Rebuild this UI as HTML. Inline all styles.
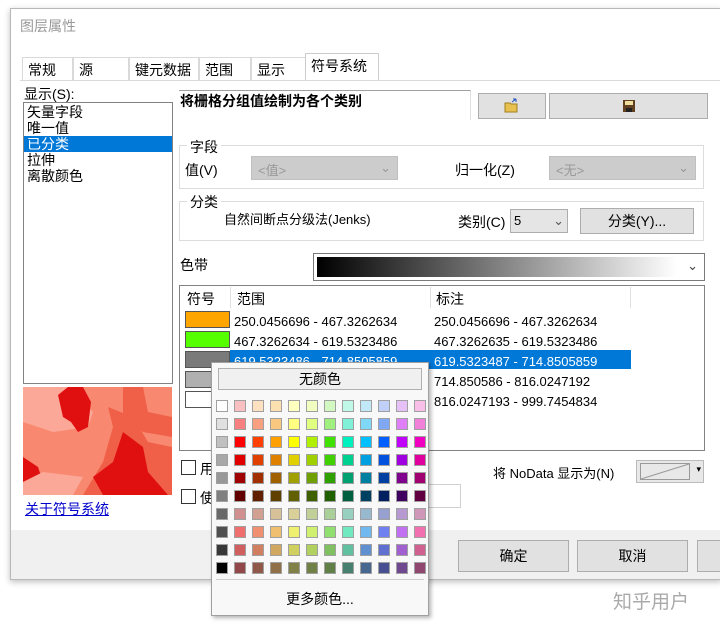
<!DOCTYPE html>
<html><head><meta charset="utf-8"><style>
*{box-sizing:border-box;margin:0;padding:0}
body{width:720px;height:624px;background:#fff;position:relative;overflow:hidden;font-family:"Liberation Sans","Noto Sans CJK SC",sans-serif;font-size:13px;color:#000}
.a{position:absolute}
.win{left:10px;top:8px;width:712px;height:572px;border:1px solid #b8b8b8;background:#fff;box-shadow:0 2px 6px rgba(0,0,0,.25)}
.tab{position:absolute;top:57px;height:24px;border:1px solid #d9d9d9;border-bottom:none;background:#fff;font-size:14px;padding:2px 5px}
.btn{position:absolute;background:#e1e1e1;border:1px solid #adadad;text-align:center;font-size:14px}
.combo{position:absolute;background:#ccc;border:1px solid #c0c0c0;color:#999;font-size:13px;padding:3px 6px}
.grp{position:absolute;border:1px solid #dcdcdc}
.sw{position:absolute;width:12px;height:12px;border:1px solid #a0a0a0}
.cb{position:absolute;width:15px;height:15px;border:1px solid #333;background:#fff}
td{padding:0}
</style></head><body>
<div class="a win"></div>
<div class="a" style="left:20px;top:16px;font-size:14px;color:#999">图层属性</div>
<!-- tabs -->
<div class="tab" style="left:22px;width:51px">常规</div>
<div class="tab" style="left:73px;width:56px">源</div>
<div class="tab" style="left:129px;width:70px">键元数据</div>
<div class="tab" style="left:199px;width:52px">范围</div>
<div class="tab" style="left:251px;width:55px">显示</div>
<div class="tab" style="left:305px;top:53px;height:28px;width:74px;border-color:#ccc">符号系统</div>
<div class="a" style="left:20px;top:80px;width:700px;height:1px;background:#d9d9d9"></div>
<div class="a" style="left:24px;top:84px;font-size:14px">显示(S):</div>
<div class="a" style="left:23px;top:102px;width:150px;height:282px;border:1px solid #828282;font-size:14px;line-height:16px;padding-top:1px">
<div style="padding-left:3px">矢量字段</div><div style="padding-left:3px">唯一值</div>
<div style="padding-left:3px;background:#0078d7;color:#fff">已分类</div>
<div style="padding-left:3px">拉伸</div><div style="padding-left:3px">离散颜色</div></div>
<svg class="a" style="left:23px;top:387px" width="149" height="108" viewBox="0 0 149 108">
<rect width="149" height="108" fill="#f88870"/>
<path d="M0 0H60V15L70 25L65 40L30 45L0 35Z" fill="#fca898"/>
<path d="M100 0H149V50L120 45L100 30Z" fill="#f06048"/>
<path d="M35 8L45 0H60L68 15L65 40L55 45L48 35L40 30Z" fill="#e01010"/>
<path d="M85 20L110 30L125 55L149 60V108H60L80 75L90 40Z" fill="#f06048"/>
<path d="M100 45L120 60L125 85L145 108H80L70 90L90 75Z" fill="#e01010"/>
<path d="M0 70L15 80L20 95L0 108Z" fill="#e01010"/>
<path d="M0 95L20 85L60 90L50 108H0Z" fill="#fca898"/>
<path d="M120 0H149V30L125 25Z" fill="#f88870"/>
</svg>
<div class="a" style="left:25px;top:499px;font-size:14px;color:#0000cc;text-decoration:underline">关于符号系统</div>
<!-- right -->
<div class="a" style="left:179px;top:90px;width:292px;height:30px;border-top:1px solid #a0a0a0;border-right:1px solid #e0e0e0;font-weight:bold;font-size:14px;padding-left:1px">将栅格分组值绘制为各个类别</div>
<div class="btn" style="left:478px;top:93px;width:68px;height:26px"><svg width="18" height="16" viewBox="0 0 18 16" style="margin-top:4px"><path d="M2 5H7L8 6H14V14H2Z" fill="#e8c050" stroke="#a08020"/><path d="M9 4L13 1M13 1L10 1M13 1L13 4" stroke="#2050c0" fill="none"/></svg></div>
<div class="btn" style="left:549px;top:93px;width:159px;height:26px"><svg width="14" height="14" viewBox="0 0 14 14" style="margin-top:5px"><rect x="1" y="1" width="12" height="12" fill="#604020"/><rect x="3" y="2" width="8" height="4" fill="#f0e0a0"/><rect x="4" y="9" width="6" height="4" fill="#222"/></svg></div>
<div class="grp" style="left:179px;top:145px;width:525px;height:44px"></div>
<div class="a" style="left:187px;top:137px;background:#fff;padding:0 3px;font-size:14px">字段</div>
<div class="a" style="left:185px;top:160px;font-size:14px">值(V)</div>
<div class="combo" style="left:251px;top:156px;width:147px;height:24px">&lt;值&gt;<span style="float:right">⌄</span></div>
<div class="a" style="left:455px;top:160px;font-size:14px">归一化(Z)</div>
<div class="combo" style="left:549px;top:156px;width:147px;height:24px">&lt;无&gt;<span style="float:right">⌄</span></div>
<div class="grp" style="left:179px;top:201px;width:525px;height:40px"></div>
<div class="a" style="left:187px;top:192px;background:#fff;padding:0 3px;font-size:14px">分类</div>
<div class="a" style="left:224px;top:209px;font-size:13px">自然间断点分级法(Jenks)</div>
<div class="a" style="left:458px;top:212px;font-size:14px">类别(C)</div>
<div class="a" style="left:510px;top:209px;width:58px;height:24px;background:#e5e5e5;border:1px solid #adadad;padding:3px 3px;font-size:13px">5<span style="float:right;color:#555">⌄</span></div>
<div class="btn" style="left:580px;top:208px;width:114px;height:26px;line-height:24px">分类(Y)...</div>
<div class="a" style="left:180px;top:255px;font-size:14px">色带</div>
<div class="a" style="left:313px;top:253px;width:392px;height:28px;border:1px solid #7a7a7a;padding:3px"><div style="width:360px;height:20px;background:linear-gradient(90deg,#000,#fff)"></div><span class="a" style="right:6px;top:4px;color:#444">⌄</span></div>
<!-- table -->
<div class="a" style="left:179px;top:285px;width:526px;height:166px;border:1px solid #828282"></div>
<div class="a" style="left:230px;top:287px;width:1px;height:21px;background:#e0e0e0"></div>
<div class="a" style="left:430px;top:287px;width:1px;height:21px;background:#e0e0e0"></div>
<div class="a" style="left:630px;top:287px;width:1px;height:21px;background:#e0e0e0"></div>
<div class="a" style="left:187px;top:289px;font-size:14px">符号</div>
<div class="a" style="left:237px;top:289px;font-size:14px">范围</div>
<div class="a" style="left:436px;top:289px;font-size:14px">标注</div>
<div class="a" style="left:230px;top:350px;width:401px;height:19px;background:#0078d7"></div>
<div class="a" style="left:185px;top:311px;width:45px;height:17px;background:#ffa500;border:1px solid #555"></div>
<div class="a" style="left:185px;top:331px;width:45px;height:17px;background:#55ff00;border:1px solid #555"></div>
<div class="a" style="left:185px;top:351px;width:45px;height:17px;background:#7a7a7a;border:1px solid #555"></div>
<div class="a" style="left:185px;top:371px;width:45px;height:17px;background:#b0b0b0;border:1px solid #555"></div>
<div class="a" style="left:185px;top:391px;width:45px;height:17px;background:#fff;border:1px solid #555"></div>
<div class="a" style="left:234px;top:312px;line-height:20px;font-size:13px">250.0456696 - 467.3262634<br>467.3262634 - 619.5323486<br><span style="color:#fff">619.5323486 - 714.8505859</span></div>
<div class="a" style="left:434px;top:312px;line-height:20px;font-size:13px">250.0456696 - 467.3262634<br>467.3262635 - 619.5323486<br><span style="color:#fff">619.5323487 - 714.8505859</span><br>714.850586 - 816.0247192<br>816.0247193 - 999.7454834</div>
<div class="cb" style="left:181px;top:460px"></div><div class="a" style="left:200px;top:459px;font-size:14px">用</div>
<div class="cb" style="left:181px;top:489px"></div><div class="a" style="left:200px;top:488px;font-size:14px">使</div>
<div class="a" style="left:420px;top:484px;width:41px;height:24px;border:1px solid #d0d0d0"></div>
<div class="a" style="left:493px;top:463px;font-size:13px">将 NoData 显示为(N)</div>
<div class="a" style="left:636px;top:460px;width:68px;height:23px;border:1px solid #bbb;background:#e8e8e8"><svg class="a" style="left:3px;top:2px" width="50" height="17"><rect x=".5" y=".5" width="49" height="16" fill="#e8e8e8" stroke="#999"/><line x1="1" y1="16" x2="49" y2="1" stroke="#999"/></svg><span class="a" style="right:2px;top:3px;font-size:9px">▾</span></div>
<!-- bottom -->
<div class="a" style="left:11px;top:530px;width:710px;height:49px;background:#f0f0f0"></div>
<div class="btn" style="left:458px;top:540px;width:111px;height:32px;line-height:30px">确定</div>
<div class="btn" style="left:577px;top:540px;width:111px;height:32px;line-height:30px">取消</div>
<div class="btn" style="left:697px;top:540px;width:30px;height:32px"></div>
<div class="a" style="left:613px;top:587px;font-size:19px;color:#aaa">知乎用户</div>
<!-- popup -->
<div class="a" style="left:211px;top:362px;width:218px;height:254px;background:#f8f8f8;border:1px solid #a0a0a0;box-shadow:2px 2px 4px rgba(0,0,0,.3)"></div>
<div class="btn" style="left:218px;top:368px;width:204px;height:22px;line-height:20px;background:#f0f0f0;border-color:#b0b0b0">无颜色</div>
<div id="g"></div>
<div class="a" style="left:216px;top:579px;width:208px;height:1px;background:#ccc"></div>
<div class="a" style="left:211px;top:589px;width:218px;text-align:center;font-size:14px">更多颜色...</div>
<script>
var c=[
"#fff #f8c0c0 #fde0c0 #fde0b0 #ffffc0 #f0ffc0 #d0f8c0 #c0f8e8 #c0e8f8 #c0d0f8 #e8c0f8 #f8c0e8",
"#e0e0e0 #f88080 #f8a080 #f8c880 #ffff80 #e0ff80 #a0f080 #80f0d8 #80d8f8 #80a8f8 #e080f8 #f080d8",
"#c0c0c0 #ff0000 #ff4000 #ffa000 #ffff00 #b0f000 #40e000 #00f0c0 #00c0ff #0060ff #c000ff #f000c0",
"#a8a8a8 #e00000 #e04000 #e08000 #e0d000 #a0d000 #40d000 #00d090 #00a0e0 #0050e0 #a000e0 #e000a0",
"#989898 #a00000 #a03000 #a06000 #a0a000 #70a000 #30a000 #00a070 #0080a0 #0040a0 #800090 #a00070",
"#808080 #600000 #602000 #604000 #606000 #406000 #206000 #006040 #004060 #002060 #400060 #600040",
"#686868 #d09090 #d0a090 #d8c098 #d8d098 #c0d098 #a8d098 #98d0c0 #98b8d0 #98a0d0 #b898d0 #d098b8",
"#505050 #f07070 #f09070 #f0c070 #f0f070 #d0f070 #90e070 #70e8c0 #70b8f0 #7080f0 #c070f0 #f070b0",
"#383838 #d06060 #d08060 #d0a860 #d0d060 #b0d060 #80c060 #60c0a0 #6090d0 #6070d0 #a060d0 #d06090",
"#000 #904848 #905848 #907048 #808048 #708048 #608048 #488070 #486890 #485090 #704890 #904870"];
var h="";c.forEach(function(r,i){r.split(" ").forEach(function(k,j){h+='<div class="sw" style="left:'+(216+j*18)+'px;top:'+(400+i*18)+'px;background:'+k+'"></div>'})});
document.getElementById("g").innerHTML=h;
</script>
</body></html>
